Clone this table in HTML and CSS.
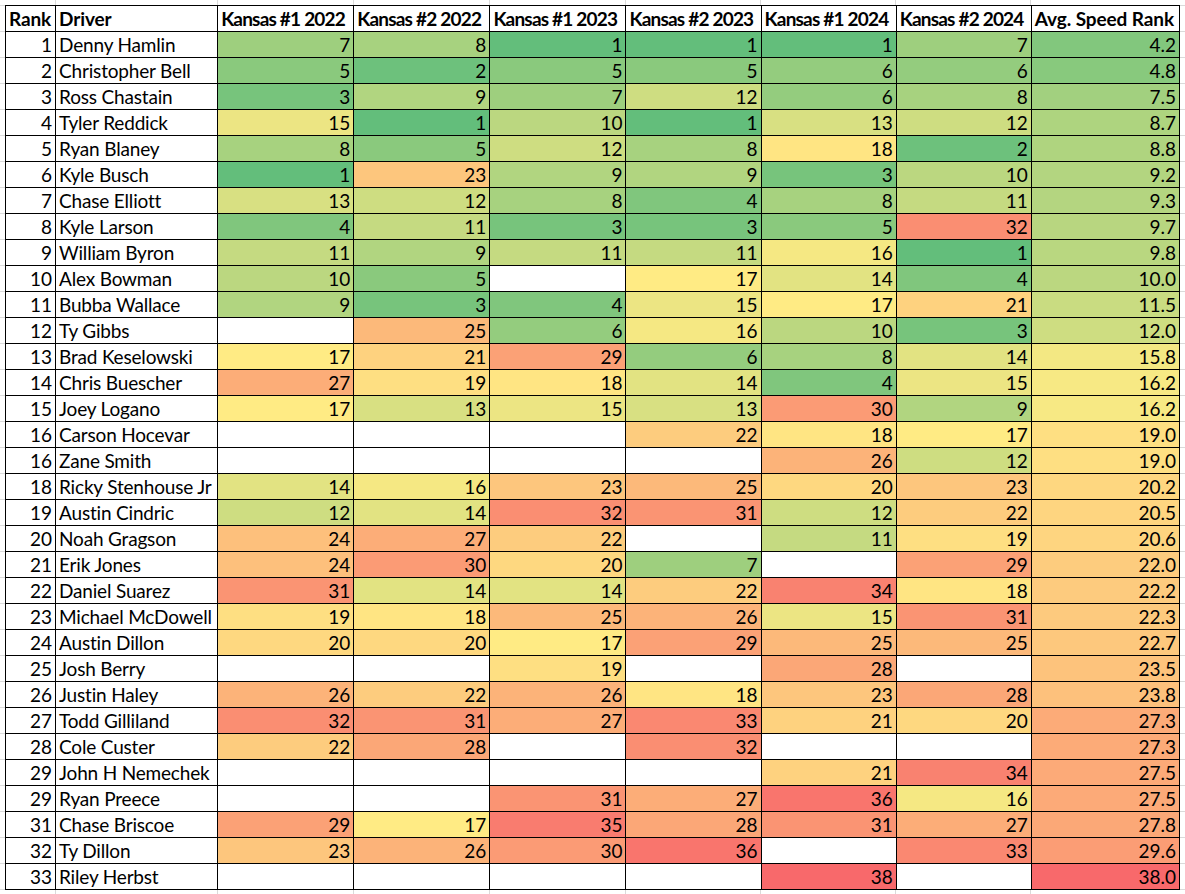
FILE: index.html
```html
<!DOCTYPE html>
<html lang="en">
<head>
<meta charset="utf-8">
<title>Kansas Speed Rankings</title>
<link rel="stylesheet" href="styles.css">
</head>
<body>
<div class="sheet">
<table class="grid">
<colgroup>
<col class="c-rank"><col class="c-driver"><col class="c-w135"><col class="c-w135"><col class="c-w135"><col class="c-w134"><col class="c-w134"><col class="c-w134"><col class="c-avg">
</colgroup>
<thead>
<tr><th>Rank</th><th>Driver</th><th class="race-h">Kansas #1 2022</th><th class="race-h">Kansas #2 2022</th><th class="race-h">Kansas #1 2023</th><th class="race-h">Kansas #2 2023</th><th class="race-h">Kansas #1 2024</th><th class="race-h">Kansas #2 2024</th><th>Avg. Speed Rank</th></tr>
</thead>
<tbody>
<tr><td class="num">1</td><td class="name">Denny Hamlin</td><td class="race">7</td><td class="race">8</td><td class="race">1</td><td class="race">1</td><td class="race">1</td><td class="race">7</td><td class="avg">4.2</td></tr>
<tr><td class="num">2</td><td class="name">Christopher Bell</td><td class="race">5</td><td class="race">2</td><td class="race">5</td><td class="race">5</td><td class="race">6</td><td class="race">6</td><td class="avg">4.8</td></tr>
<tr><td class="num">3</td><td class="name">Ross Chastain</td><td class="race">3</td><td class="race">9</td><td class="race">7</td><td class="race">12</td><td class="race">6</td><td class="race">8</td><td class="avg">7.5</td></tr>
<tr><td class="num">4</td><td class="name">Tyler Reddick</td><td class="race">15</td><td class="race">1</td><td class="race">10</td><td class="race">1</td><td class="race">13</td><td class="race">12</td><td class="avg">8.7</td></tr>
<tr><td class="num">5</td><td class="name">Ryan Blaney</td><td class="race">8</td><td class="race">5</td><td class="race">12</td><td class="race">8</td><td class="race">18</td><td class="race">2</td><td class="avg">8.8</td></tr>
<tr><td class="num">6</td><td class="name">Kyle Busch</td><td class="race">1</td><td class="race">23</td><td class="race">9</td><td class="race">9</td><td class="race">3</td><td class="race">10</td><td class="avg">9.2</td></tr>
<tr><td class="num">7</td><td class="name">Chase Elliott</td><td class="race">13</td><td class="race">12</td><td class="race">8</td><td class="race">4</td><td class="race">8</td><td class="race">11</td><td class="avg">9.3</td></tr>
<tr><td class="num">8</td><td class="name">Kyle Larson</td><td class="race">4</td><td class="race">11</td><td class="race">3</td><td class="race">3</td><td class="race">5</td><td class="race">32</td><td class="avg">9.7</td></tr>
<tr><td class="num">9</td><td class="name">William Byron</td><td class="race">11</td><td class="race">9</td><td class="race">11</td><td class="race">11</td><td class="race">16</td><td class="race">1</td><td class="avg">9.8</td></tr>
<tr><td class="num">10</td><td class="name">Alex Bowman</td><td class="race">10</td><td class="race">5</td><td class="race"></td><td class="race">17</td><td class="race">14</td><td class="race">4</td><td class="avg">10.0</td></tr>
<tr><td class="num">11</td><td class="name">Bubba Wallace</td><td class="race">9</td><td class="race">3</td><td class="race">4</td><td class="race">15</td><td class="race">17</td><td class="race">21</td><td class="avg">11.5</td></tr>
<tr><td class="num">12</td><td class="name">Ty Gibbs</td><td class="race"></td><td class="race">25</td><td class="race">6</td><td class="race">16</td><td class="race">10</td><td class="race">3</td><td class="avg">12.0</td></tr>
<tr><td class="num">13</td><td class="name">Brad Keselowski</td><td class="race">17</td><td class="race">21</td><td class="race">29</td><td class="race">6</td><td class="race">8</td><td class="race">14</td><td class="avg">15.8</td></tr>
<tr><td class="num">14</td><td class="name">Chris Buescher</td><td class="race">27</td><td class="race">19</td><td class="race">18</td><td class="race">14</td><td class="race">4</td><td class="race">15</td><td class="avg">16.2</td></tr>
<tr><td class="num">15</td><td class="name">Joey Logano</td><td class="race">17</td><td class="race">13</td><td class="race">15</td><td class="race">13</td><td class="race">30</td><td class="race">9</td><td class="avg">16.2</td></tr>
<tr><td class="num">16</td><td class="name">Carson Hocevar</td><td class="race"></td><td class="race"></td><td class="race"></td><td class="race">22</td><td class="race">18</td><td class="race">17</td><td class="avg">19.0</td></tr>
<tr><td class="num">16</td><td class="name">Zane Smith</td><td class="race"></td><td class="race"></td><td class="race"></td><td class="race"></td><td class="race">26</td><td class="race">12</td><td class="avg">19.0</td></tr>
<tr><td class="num">18</td><td class="name">Ricky Stenhouse Jr</td><td class="race">14</td><td class="race">16</td><td class="race">23</td><td class="race">25</td><td class="race">20</td><td class="race">23</td><td class="avg">20.2</td></tr>
<tr><td class="num">19</td><td class="name">Austin Cindric</td><td class="race">12</td><td class="race">14</td><td class="race">32</td><td class="race">31</td><td class="race">12</td><td class="race">22</td><td class="avg">20.5</td></tr>
<tr><td class="num">20</td><td class="name">Noah Gragson</td><td class="race">24</td><td class="race">27</td><td class="race">22</td><td class="race"></td><td class="race">11</td><td class="race">19</td><td class="avg">20.6</td></tr>
<tr><td class="num">21</td><td class="name">Erik Jones</td><td class="race">24</td><td class="race">30</td><td class="race">20</td><td class="race">7</td><td class="race"></td><td class="race">29</td><td class="avg">22.0</td></tr>
<tr><td class="num">22</td><td class="name">Daniel Suarez</td><td class="race">31</td><td class="race">14</td><td class="race">14</td><td class="race">22</td><td class="race">34</td><td class="race">18</td><td class="avg">22.2</td></tr>
<tr><td class="num">23</td><td class="name">Michael McDowell</td><td class="race">19</td><td class="race">18</td><td class="race">25</td><td class="race">26</td><td class="race">15</td><td class="race">31</td><td class="avg">22.3</td></tr>
<tr><td class="num">24</td><td class="name">Austin Dillon</td><td class="race">20</td><td class="race">20</td><td class="race">17</td><td class="race">29</td><td class="race">25</td><td class="race">25</td><td class="avg">22.7</td></tr>
<tr><td class="num">25</td><td class="name">Josh Berry</td><td class="race"></td><td class="race"></td><td class="race">19</td><td class="race"></td><td class="race">28</td><td class="race"></td><td class="avg">23.5</td></tr>
<tr><td class="num">26</td><td class="name">Justin Haley</td><td class="race">26</td><td class="race">22</td><td class="race">26</td><td class="race">18</td><td class="race">23</td><td class="race">28</td><td class="avg">23.8</td></tr>
<tr><td class="num">27</td><td class="name">Todd Gilliland</td><td class="race">32</td><td class="race">31</td><td class="race">27</td><td class="race">33</td><td class="race">21</td><td class="race">20</td><td class="avg">27.3</td></tr>
<tr><td class="num">28</td><td class="name">Cole Custer</td><td class="race">22</td><td class="race">28</td><td class="race"></td><td class="race">32</td><td class="race"></td><td class="race"></td><td class="avg">27.3</td></tr>
<tr><td class="num">29</td><td class="name">John H Nemechek</td><td class="race"></td><td class="race"></td><td class="race"></td><td class="race"></td><td class="race">21</td><td class="race">34</td><td class="avg">27.5</td></tr>
<tr><td class="num">29</td><td class="name">Ryan Preece</td><td class="race"></td><td class="race"></td><td class="race">31</td><td class="race">27</td><td class="race">36</td><td class="race">16</td><td class="avg">27.5</td></tr>
<tr><td class="num">31</td><td class="name">Chase Briscoe</td><td class="race">29</td><td class="race">17</td><td class="race">35</td><td class="race">28</td><td class="race">31</td><td class="race">27</td><td class="avg">27.8</td></tr>
<tr><td class="num">32</td><td class="name">Ty Dillon</td><td class="race">23</td><td class="race">26</td><td class="race">30</td><td class="race">36</td><td class="race"></td><td class="race">33</td><td class="avg">29.6</td></tr>
<tr><td class="num">33</td><td class="name">Riley Herbst</td><td class="race"></td><td class="race"></td><td class="race"></td><td class="race"></td><td class="race">38</td><td class="race"></td><td class="avg">38.0</td></tr>
</tbody>
</table>
</div>
<script src="script.js"></script>
</body>
</html>
```

FILE: styles.css
```css
html {
  background-color: #ffffff;
  background-image:
    linear-gradient(to right,
      transparent 55px, #dadada 55px 56px,
      transparent 56px 217px, #dadada 217px 218px,
      transparent 218px 353px, #dadada 353px 354px,
      transparent 354px 489px, #dadada 489px 490px,
      transparent 490px 625px, #dadada 625px 626px,
      transparent 626px 760px, #dadada 760px 761px,
      transparent 761px 895px, #dadada 895px 896px,
      transparent 896px 1030px, #dadada 1030px 1031px,
      transparent 1031px),
    linear-gradient(to bottom, #dadada 0 1px, transparent 1px);
  background-size: 100% 100%, 100% 26px;
  background-position: 0 0, 0 5px;
  background-repeat: no-repeat, repeat;
  min-height: 100%;
}

body {
  margin: 0;
  font-family: Lato, "Noto Sans", sans-serif;
  font-size: 19px;
  color: #000;
}

.sheet {
  padding: 5px 0 0 5px;
}

.grid {
  table-layout: fixed;
  width: 1175px;
  border-collapse: separate;
  border-spacing: 1px;
  background: #000;
}

.c-rank { width: 49px; }
.c-driver { width: 161px; }
.c-w135 { width: 135px; }
.c-w134 { width: 134px; }
.c-avg { width: 147px; }

.grid th,
.grid td {
  height: 25px;
  padding: 0 3px;
  background: #fff;
  line-height: 25px;
  white-space: nowrap;
  overflow: hidden;
  box-sizing: border-box;
  vertical-align: bottom;
}

.grid th {
  font-weight: 700;
  text-align: left;
  letter-spacing: -0.1px;
}

.grid th.race-h {
  letter-spacing: -0.8px;
}

.grid td.num,
.grid td.race,
.grid td.avg {
  text-align: right;
}

.grid td.name {
  text-align: left;
  letter-spacing: -0.18px;
}
```

FILE: script.js
```js
(function () {
  var low = [99, 190, 123], mid = [255, 235, 132], high = [248, 105, 107];

  function percentile(sorted, p) {
    var r = (sorted.length - 1) * p;
    var lo = Math.floor(r), hi = Math.ceil(r);
    return sorted[lo] + (sorted[hi] - sorted[lo]) * (r - lo);
  }

  function colorScale(cells) {
    var vals = cells.map(function (c) { return parseFloat(c.textContent); });
    var s = vals.slice().sort(function (a, b) { return a - b; });
    var mn = s[0], mx = s[s.length - 1], md = percentile(s, 0.5);
    cells.forEach(function (c, i) {
      var v = vals[i], a, b, t;
      if (v <= md) { a = low; b = mid; t = md === mn ? 0 : (v - mn) / (md - mn); }
      else { a = mid; b = high; t = (v - md) / (mx - md); }
      var rgb = a.map(function (x, j) { return Math.round(x + (b[j] - x) * t); });
      c.style.backgroundColor = 'rgb(' + rgb.join(',') + ')';
    });
  }

  var scored = Array.prototype.slice.call(document.querySelectorAll('td.race, td.avg'))
    .filter(function (c) { return c.textContent.trim() !== ''; });
  colorScale(scored);
})();
```
